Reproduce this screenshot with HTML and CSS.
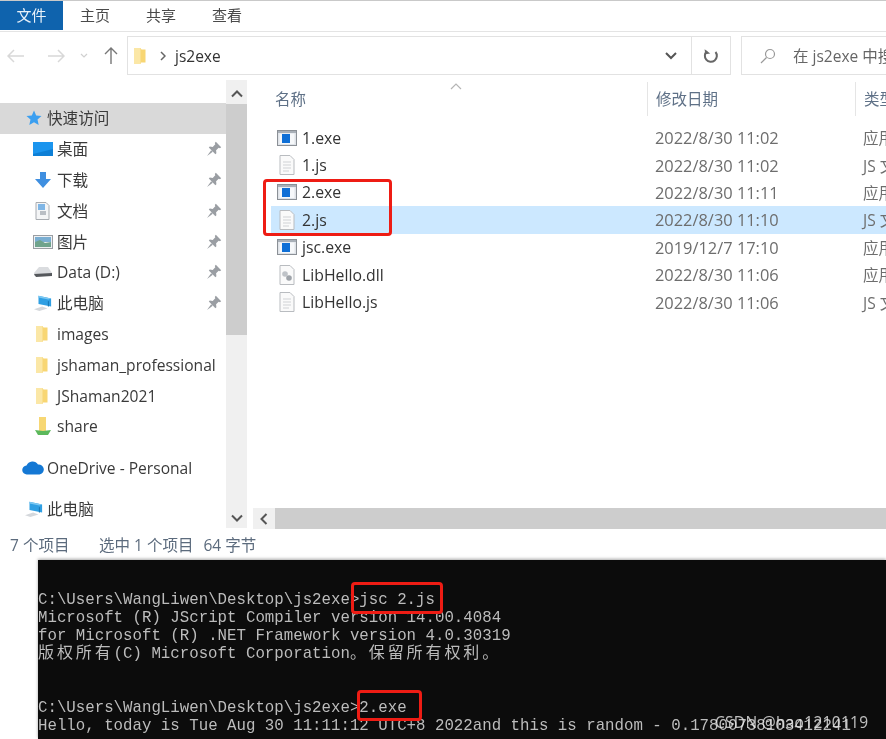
FILE: index.html
```html
<!DOCTYPE html>
<html lang="zh">
<head>
<meta charset="utf-8">
<title>js2exe</title>
<link rel="stylesheet" href="styles.css">
</head>
<body>
<svg class="defs" width="0" height="0" aria-hidden="true">
  <defs>
    <symbol id="folder" viewBox="0 0 13 18"><path d="M1 1h6.500L8.500 2.500H12.500V15.500H8L7.500 17H1z" fill="#f8d673"/><path d="M1 1h6.500V17H1z" fill="#fbe7a6"/></symbol>
    <symbol id="pin" viewBox="0 0 16 16"><path d="M9.800 .8l5.400 5.400-1.300 1-1.200-.5-2.600 2.600.3 2.900-1 1L2.800 6.600l1-1 2.900.3 2.600-2.600-.5-1.200z" fill="#9a9ea3"/><path d="M5.200 9.200L1 15l5.800-4.200z" fill="#9a9ea3"/></symbol>
    <symbol id="exe" viewBox="0 0 20 16"><rect x=".5" y=".5" width="19" height="15" fill="#dfe3e8" stroke="#8b9096"/><rect x="1" y="1" width="18" height="2" fill="#a9b0b8"/><rect x="2.500" y="3.500" width="15" height="10.500" fill="#f6f8fa"/><rect x="5" y="4" width="8" height="9" fill="#0f6fd6"/></symbol>
    <symbol id="doc" viewBox="0 0 16 20"><path d="M1 .5h10l4 4v15H1z" fill="#fafafa" stroke="#b9bcc0"/><path d="M4 7h8M4 10h8M4 13h8M4 16h6" stroke="#d0d2d5"/></symbol>
    <symbol id="dll" viewBox="0 0 16 20"><path d="M1 .5h10l4 4v15H1z" fill="#fafafa" stroke="#b9bcc0"/><circle cx="6" cy="9" r="2.800" fill="#bfc3c8"/><circle cx="10" cy="13" r="2.800" fill="#9ea3a9"/></symbol>
    <symbol id="pc" viewBox="0 0 22 20"><path d="M6 2l14 3v9L6 11z" fill="#2f9fe3"/><path d="M6 2l14 3-3 1L6 4z" fill="#7cc8f2"/><path d="M1 17l9-3 6 2-9 3z" fill="#d5d8dc"/><path d="M17 8v6" stroke="#1470ad"/></symbol>
  </defs>
</svg>
<div class="app">
  <div class="explorer">
    <nav class="tabs">
      <span class="tab tab-file">文件</span>
      <span class="tab">主页</span>
      <span class="tab">共享</span>
      <span class="tab">查看</span>
    </nav>
    <div class="toolbar">
      <div class="nav-btns">
        <svg class="ic-arrow" width="18" height="14" viewBox="0 0 18 14"><path d="M1 7h16M7 1L1 7l6 6" fill="none" stroke="#d8d8d8" stroke-width="1.500"/></svg>
        <svg class="ic-arrow" width="18" height="14" viewBox="0 0 18 14"><path d="M1 7h16M11 1l6 6-6 6" fill="none" stroke="#d8d8d8" stroke-width="1.500"/></svg>
        <svg class="ic-chev" width="8" height="6" viewBox="0 0 8 6"><path d="M1 1l3 3 3-3" fill="none" stroke="#d0d0d0" stroke-width="1.200"/></svg>
        <svg class="ic-up" width="14" height="18" viewBox="0 0 14 18"><path d="M7 17V1M1 7l6-6 6 6" fill="none" stroke="#777" stroke-width="1.400"/></svg>
      </div>
      <div class="address">
        <svg class="ic-addr" width="13" height="18"><use href="#folder"/></svg>
        <svg class="ic-gt" width="6" height="10" viewBox="0 0 6 10"><path d="M1 1l4 4-4 4" fill="none" stroke="#666" stroke-width="1.500"/></svg>
        <span class="addr-text">js2exe</span>
        <svg class="ic-down" width="12" height="8" viewBox="0 0 12 8"><path d="M1 1l5 5 5-5" fill="none" stroke="#555" stroke-width="2"/></svg>
        <span class="refresh">
          <svg width="16" height="16" viewBox="0 0 16 16"><path d="M4 3.200A6 6 0 1 0 12.500 4" fill="none" stroke="#666" stroke-width="2"/><path d="M2 1v5h5z" fill="#666" transform="rotate(-8 4 4)"/></svg>
        </span>
      </div>
      <div class="search">
        <svg class="ic-search" width="16" height="16" viewBox="0 0 16 16"><circle cx="10" cy="6" r="4.500" fill="none" stroke="#999" stroke-width="1.200"/><path d="M6.500 9.500L1 15" stroke="#999" stroke-width="1.200"/></svg>
        <span class="search-text">在 js2exe 中搜索</span>
      </div>
    </div>
    <div class="content">
      <aside class="sidebar">
        <div class="side-row side-head">
          <svg class="ic-star" width="16" height="16" viewBox="0 0 16 16"><path d="M8 .5l2.200 5 5.300.5-4 3.600 1.200 5.400L8 12.200 3.300 15l1.200-5.400-4-3.600 5.300-.5z" fill="#3b9ff0"/></svg>
          <span>快速访问</span>
        </div>
        <div class="side-row">
          <svg class="ic-l2" width="20" height="16" viewBox="0 0 20 16"><rect width="20" height="14" y="1" fill="#1b95ee"/><path d="M0 13l20-5v7H0z" fill="#0d7fd6"/></svg>
          <span>桌面</span><svg class="pin" width="16" height="16"><use href="#pin"/></svg>
        </div>
        <div class="side-row">
          <svg class="ic-l2" width="20" height="16" viewBox="0 0 20 16"><path d="M7 0h6v7h5l-8 9-8-9h5z" fill="#3f8fe0"/></svg>
          <span>下载</span><svg class="pin" width="16" height="16"><use href="#pin"/></svg>
        </div>
        <div class="side-row">
          <svg class="ic-l2" width="20" height="18" viewBox="0 0 20 18"><path d="M3 .5h10l3 3v14H3z" fill="#f4f5f6" stroke="#a8acb1"/><rect x="5" y="2" width="7" height="6" fill="#7fb6e6"/><path d="M7 9h6v4H7z" fill="#b9bec4"/></svg>
          <span>文档</span><svg class="pin" width="16" height="16"><use href="#pin"/></svg>
        </div>
        <div class="side-row">
          <svg class="ic-l2" width="20" height="14" viewBox="0 0 20 14"><rect x=".5" y=".5" width="19" height="13" fill="#eef0f2" stroke="#9a9ea3"/><rect x="2" y="2" width="16" height="5" fill="#7aaed2"/><path d="M2 7l5-2 5 3 6-1v5H2z" fill="#6fa38c"/></svg>
          <span>图片</span><svg class="pin" width="16" height="16"><use href="#pin"/></svg>
        </div>
        <div class="side-row">
          <svg class="ic-l2" width="20" height="12" viewBox="0 0 20 12"><path d="M6 1h9l4 6v3H1V7z" fill="#dadcdf"/><path d="M1 8l18-1v3L3 11z" fill="#55585c"/></svg>
          <span>Data (D:)</span><svg class="pin" width="16" height="16"><use href="#pin"/></svg>
        </div>
        <div class="side-row">
          <svg class="ic-l2" width="20" height="18"><use href="#pc"/></svg>
          <span>此电脑</span><svg class="pin" width="16" height="16"><use href="#pin"/></svg>
        </div>
        <div class="side-row">
          <svg class="ic-fold" width="13" height="18"><use href="#folder"/></svg>
          <span>images</span>
        </div>
        <div class="side-row">
          <svg class="ic-fold" width="13" height="18"><use href="#folder"/></svg>
          <span>jshaman_professional</span>
        </div>
        <div class="side-row">
          <svg class="ic-fold" width="13" height="18"><use href="#folder"/></svg>
          <span>JShaman2021</span>
        </div>
        <div class="side-row">
          <svg class="ic-l2" width="20" height="20" viewBox="0 0 20 20"><path d="M6 1h7v14H6z" fill="#f7d774"/><path d="M2 14l8 1 8-1-3 5H5z" fill="#5cb85c"/></svg>
          <span>share</span>
        </div>
        <div class="side-row side-group">
          <svg class="ic-cloud" width="22" height="14" viewBox="0 0 22 14"><path d="M5 13.500a4.500 4.500 0 0 1-.5-9A6.500 6.500 0 0 1 16 3.500a5 5 0 0 1 1.500 10z" fill="#1478d4"/></svg>
          <span>OneDrive - Personal</span>
        </div>
        <div class="side-row side-group">
          <svg class="ic-pc" width="20" height="18"><use href="#pc"/></svg>
          <span>此电脑</span>
        </div>
      </aside>
      <div class="vscroll">
        <svg width="12" height="8" viewBox="0 0 12 8"><path d="M1 6.500l5-5 5 5" fill="none" stroke="#555" stroke-width="2"/></svg>
        <div class="vtrack"><div class="vthumb"></div></div>
        <svg width="12" height="8" viewBox="0 0 12 8"><path d="M1 1.500l5 5 5-5" fill="none" stroke="#555" stroke-width="2"/></svg>
      </div>
      <main class="files">
        <header class="file-head">
          <span class="col-name">名称</span>
          <svg class="sort" width="12" height="7" viewBox="0 0 12 7"><path d="M1 6l5-5 5 5" fill="none" stroke="#b5b5b5" stroke-width="1.200"/></svg>
          <span class="col-date">修改日期</span>
          <span class="col-type">类型</span>
        </header>
        <div class="rows">
          <div class="row"><svg class="fi" width="20" height="16"><use href="#exe"/></svg><span class="fname">1.exe</span><span class="fdate">2022/8/30 11:02</span><span class="ftype">应用程序</span></div>
          <div class="row"><svg class="fi" width="16" height="20"><use href="#doc"/></svg><span class="fname">1.js</span><span class="fdate">2022/8/30 11:02</span><span class="ftype">JS 文件</span></div>
          <div class="row"><svg class="fi" width="20" height="16"><use href="#exe"/></svg><span class="fname">2.exe</span><span class="fdate">2022/8/30 11:11</span><span class="ftype">应用程序</span></div>
          <div class="row row-sel"><svg class="fi" width="16" height="20"><use href="#doc"/></svg><span class="fname">2.js</span><span class="fdate">2022/8/30 11:10</span><span class="ftype">JS 文件</span></div>
          <div class="row"><svg class="fi" width="20" height="16"><use href="#exe"/></svg><span class="fname">jsc.exe</span><span class="fdate">2019/12/7 17:10</span><span class="ftype">应用程序</span></div>
          <div class="row"><svg class="fi" width="16" height="20"><use href="#dll"/></svg><span class="fname">LibHello.dll</span><span class="fdate">2022/8/30 11:06</span><span class="ftype">应用程序</span></div>
          <div class="row"><svg class="fi" width="16" height="20"><use href="#doc"/></svg><span class="fname">LibHello.js</span><span class="fdate">2022/8/30 11:06</span><span class="ftype">JS 文件</span></div>
        </div>
        <div class="hscroll">
          <svg width="8" height="12" viewBox="0 0 8 12"><path d="M6.500 1l-5 5 5 5" fill="none" stroke="#555" stroke-width="2"/></svg>
          <div class="hthumb"></div>
        </div>
      </main>
    </div>
    <footer class="status">
      <span class="st-count">7 个项目</span>
      <span class="st-sel">选中 1 个项目</span>
      <span class="st-size">64 字节</span>
    </footer>
  </div>
  <div class="lower">
    <pre class="console">C:\Users\WangLiwen\Desktop\js2exe&gt;jsc 2.js
Microsoft (R) JScript Compiler version 14.00.4084
for Microsoft (R) .NET Framework version 4.0.30319
<span class="cjk">版权所有</span>(C) Microsoft Corporation<span class="cjk">。保留所有权利。</span>


C:\Users\WangLiwen\Desktop\js2exe&gt;2.exe
Hello, today is Tue Aug 30 11:11:12 UTC+8 2022and this is random - 0.17800738103412241</pre>
  </div>
  <div class="mark mark-files"></div>
  <div class="mark mark-cmd1"></div>
  <div class="mark mark-cmd2"></div>
  <div class="watermark">CSDN @hao1210119</div>
</div>
</body>
</html>
```
FILE: styles.css
```css
* { box-sizing: border-box; }
html, body { margin: 0; padding: 0; background: #fff; }
.defs { position: absolute; }
.app {
  position: relative;
  width: 886px;
  height: 739px;
  overflow: hidden;
  display: flex;
  flex-direction: column;
  font-family: "Open Sans", "Noto Sans CJK SC", sans-serif;
  color: #3a3a3a;
  filter: blur(0.45px);
}
.explorer { height: 560px; display: flex; flex-direction: column; flex: none; }

.tabs { height: 32px; display: flex; border-top: 1px solid #c9c9c9; border-bottom: 1px solid #e4e4e4; flex: none; }
.tab { width: 66px; text-align: center; font-size: 15px; line-height: 29px; color: #4a4a4a; }
.tab-file { width: 63px; height: 29px; background: #0f63ad; color: #e8f1f9; margin-right: -1px; }

.toolbar { height: 48px; display: flex; align-items: flex-start; padding-top: 4px; flex: none; }
.nav-btns { width: 127px; height: 39px; display: flex; align-items: center; padding-left: 7px; padding-top: 1px; }
.nav-btns .ic-arrow:nth-child(2) { margin-left: 22px; }
.ic-chev { margin-left: 15px; }
.ic-up { margin-left: 16px; }
.address { width: 604px; height: 39px; border: 1px solid #e2e2e2; display: flex; align-items: center; padding-left: 5px; }
.ic-gt { margin-left: 14px; }
.addr-text { font-size: 15.500px; margin-left: 9px; color: #333; flex: 1; }
.ic-down { margin-right: 14px; }
.refresh { width: 39px; height: 37px; border-left: 1px solid #e2e2e2; display: flex; align-items: center; justify-content: center; }
.search { margin-left: 10px; flex: 1; min-width: 0; height: 39px; border: 1px solid #e2e2e2; border-right: 0; display: flex; align-items: center; padding-left: 18px; white-space: nowrap; overflow: hidden; }
.ic-search { flex: none; }
.search-text { font-size: 15.500px; color: #666; margin-left: 17px; }

.content { flex: 1; display: flex; min-height: 0; }
.sidebar { width: 226px; flex: none; padding-top: 23px; font-size: 15.600px; }
.side-row { height: 30.8px; display: flex; align-items: center; white-space: nowrap; }
.side-row span { line-height: 20px; }
.side-head { background: #d9d9d9; }
.side-group { margin-top: 10.500px; }
.ic-star { margin-left: 26px; margin-right: 5px; flex: none; }
.ic-cloud { margin-left: 22px; margin-right: 3px; flex: none; }
.ic-pc { margin-left: 24px; margin-right: 3px; flex: none; }
.ic-l2 { margin-left: 33px; margin-right: 4px; flex: none; }
.ic-fold { margin-left: 35px; margin-right: 9px; flex: none; }
.pin { margin-left: auto; margin-right: 4px; flex: none; }

.vscroll { width: 21px; flex: none; background: #f0f0f0; display: flex; flex-direction: column; align-items: center; padding: 10px 0 6px; height: 448px; }
.vtrack { flex: 1; width: 100%; padding-top: 6px; }
.vthumb { height: 231px; background: #cdcdcd; }

.files { flex: 1; min-width: 0; display: flex; flex-direction: column; position: relative; }
.file-head { height: 40px; position: relative; display: flex; font-size: 15.500px; color: #5f7187; line-height: 38px; flex: none; }
.col-name { margin-left: 28px; width: 372px; flex: none; }
.sort { position: absolute; left: 203px; top: 3px; }
.col-date { width: 208px; flex: none; padding-left: 8px; border-left: 1px solid #e5e5e5; height: 34px; margin-top: 2px; line-height: 34px; }
.col-type { flex: none; padding-left: 8px; border-left: 1px solid #e5e5e5; height: 34px; margin-top: 2px; line-height: 34px; white-space: nowrap; }
.rows { flex: 1; margin-left: 24px; padding-top: 4px; }
.row { height: 27.4px; display: grid; grid-template-columns: 31px 353px 208px 1fr; align-items: center; white-space: nowrap; overflow: hidden; }
.row-sel { background: #cce8ff; }
.fi { justify-self: center; margin-left: 1px; }
.fname { font-size: 15.800px; color: #333; }
.fdate { font-size: 16.400px; color: #6d6d6d; }
.ftype { font-size: 15.500px; color: #6d6d6d; }

.hscroll { height: 21px; margin-left: 6px; background: #f0f0f0; display: flex; align-items: center; padding-left: 7px; flex: none; }
.hthumb { flex: 1; height: 100%; margin-left: 7px; background: #cdcdcd; }

.status { height: 31px; flex: none; display: flex; align-items: center; font-size: 15.500px; color: #5c6b7d; padding-left: 10px; }
.st-count { width: 89px; }
.st-sel { margin-right: 10px; }

.lower { flex: 1; padding-left: 38px; min-height: 0; }
.console {
  margin: 0;
  height: 100%;
  background: #0c0c0c;
  box-shadow: 0 -1px 3px rgba(0,0,0,.35);
  color: #bcbcbc;
  font-family: "Liberation Mono", monospace;
  font-size: 15.750px;
  line-height: 18px;
  padding-top: 31px;
  white-space: pre;
  overflow: hidden;
}
.cjk { font-family: "Noto Sans CJK SC", sans-serif; font-size: 16px; letter-spacing: 2.900px; line-height: 0; }

.mark { position: absolute; border: 3px solid #ee1c14; border-radius: 4px; }
.mark-files { left: 263px; top: 179px; width: 129px; height: 57px; }
.mark-cmd1 { left: 351px; top: 582px; width: 92px; height: 32px; }
.mark-cmd2 { left: 357px; top: 690px; width: 65px; height: 31px; }
.watermark { position: absolute; left: 715px; top: 712px; font-size: 15.500px; line-height: 20px; letter-spacing: .3px; color: rgba(235,235,235,.8); white-space: nowrap; }
```
